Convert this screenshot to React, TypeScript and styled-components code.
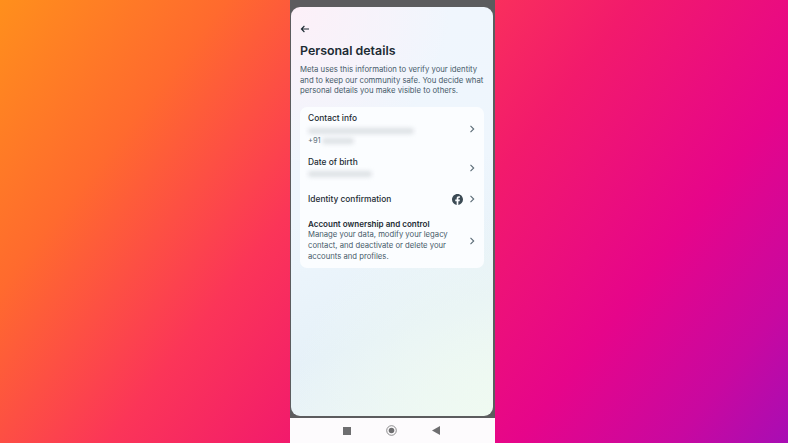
import React from "react";
import styled, { createGlobalStyle } from "styled-components";

const Global = createGlobalStyle`
  html, body { margin: 0; padding: 0; height: 100%; overflow: hidden; }
  #root { height: 100%; }
  * { box-sizing: border-box; }
`;

const Stage = styled.div`
  width: 788px;
  height: 443px;
  display: flex;
  justify-content: center;
  padding-right: 3px;
  background: linear-gradient(128deg, #ff8f1c 0%, #ff6a2e 20%, #fb3558 40%, #f21a6c 56%, #e6058a 76%, #c808a0 90%, #a80db4 100%);
  font-family: Inter, "Noto Sans", sans-serif;
`;

const Phone = styled.div`
  width: 205px;
  height: 443px;
  display: flex;
  flex-direction: column;
  background: #5c5c5e;
`;

const Sheet = styled.main`
  width: 202px;
  height: 409px;
  margin: 7px 0 2px 1px;
  padding: 17px 9px 0;
  border-radius: 9px;
  background:
    radial-gradient(circle at 0% 0%, #fdf0f8 0%, rgba(253,240,248,0) 35%),
    radial-gradient(circle at 100% 100%, #effaf1 0%, rgba(239,250,241,0) 45%),
    linear-gradient(160deg, #f1f6fd 0%, #eef6fd 45%, #e6f1f8 75%, #edf6f5 100%);
`;

const Back = styled.button`
  display: block;
  width: 10px;
  height: 10px;
  padding: 0;
  border: 0;
  background: none;
  color: #1c2b33;
  margin-bottom: 8px;
  svg { display: block; }
`;

const Title = styled.h1`
  margin: 0 0 5px;
  font-size: 12.4px;
  line-height: 17px;
  font-weight: 600;
  color: #1c2b33;
`;

const Intro = styled.p`
  margin: 0 0 11.7px;
  font-size: 7.75px;
  line-height: 10.6px;
  color: #465a69;
  white-space: nowrap;
`;

const Card = styled.section`
  width: 184px;
  height: 161px;
  padding-top: 5.5px;
  border-radius: 7px;
  background: #fbfdff;
  display: flex;
  flex-direction: column;
`;

const Row = styled.div<{ $h: number; $top?: number }>`
  height: ${(p) => p.$h}px;
  padding: ${(p) => p.$top ?? 0}px 9px 0 8px;
  display: flex;
  align-items: center;
  gap: 6.5px;
`;

const RowBody = styled.div`
  flex: 1;
  min-width: 0;
`;

const LiftedBody = styled(RowBody)`
  padding-bottom: 3px;
`;

const RowTitle = styled.div`
  font-size: 8.4px;
  line-height: 11px;
  font-weight: 500;
  color: #1c2b33;
  white-space: nowrap;
`;

const StrongTitle = styled(RowTitle)`
  font-size: 8.05px;
  font-weight: 600;
`;

const RowText = styled.div`
  font-size: 7.7px;
  line-height: 10.8px;
  color: #465a69;
  white-space: nowrap;
`;

const Blur = styled.div<{ $w: number }>`
  width: ${(p) => p.$w}px;
  height: 6px;
  margin-top: 3.5px;
  background: #dde1e5;
  border-radius: 3px;
  filter: blur(2px);
`;

const PhoneLine = styled.div`
  display: flex;
  align-items: center;
  gap: 1px;
  margin-top: 2px;
  font-size: 7.5px;
  line-height: 10px;
  color: #5a6c78;
  ${Blur} { margin-top: 0; }
`;

const Chevron = styled.svg`
  flex: none;
  width: 6px;
  height: 8px;
  color: #5a6b76;
`;

const FacebookMark = styled.svg`
  flex: none;
  width: 11px;
  height: 11px;
  fill: #3b4a54;
`;

const NavBar = styled.nav`
  height: 25px;
  background: #fdfbfd;
  display: flex;
  align-items: center;
  justify-content: center;
  gap: 35px;
  padding-right: 2px;
  color: #6e6e70;
  svg { display: block; }
`;

const Caret = () => (
  <Chevron viewBox="0 0 6 8" fill="none" stroke="currentColor" strokeWidth="1.1">
    <path d="M1.5 .8 4.7 4 1.5 7.2" />
  </Chevron>
);

export default function App() {
  return (
    <Stage>
      <Global />
      <Phone>
        <Sheet>
          <Back aria-label="Back">
            <svg width="10" height="10" viewBox="0 0 10 10" fill="none" stroke="currentColor" strokeWidth="1.1">
              <path d="M9 5H1.4M4.4 2 1.4 5l3 3" />
            </svg>
          </Back>
          <Title>Personal details</Title>
          <Intro>
            Meta uses this information to verify your identity
            <br />
            and to keep our community safe. You decide what
            <br />
            personal details you make visible to others.
          </Intro>
          <Card>
            <Row $h={33}>
              <RowBody>
                <RowTitle>Contact info</RowTitle>
                <Blur $w={106} />
                <PhoneLine>
                  +91<Blur $w={32} />
                </PhoneLine>
              </RowBody>
              <Caret />
            </Row>
            <Row $h={45}>
              <LiftedBody>
                <RowTitle>Date of birth</RowTitle>
                <Blur $w={64} />
              </LiftedBody>
              <Caret />
            </Row>
            <Row $h={17}>
              <RowBody>
                <RowTitle>Identity confirmation</RowTitle>
              </RowBody>
              <FacebookMark viewBox="0 0 24 24">
                <path d="M24 12.07C24 5.4 18.63 0 12 0S0 5.4 0 12.07c0 6.03 4.39 11.02 10.13 11.93v-8.44H7.08v-3.49h3.05V9.41c0-3.02 1.79-4.69 4.53-4.69 1.31 0 2.69.24 2.69.24v2.97h-1.51c-1.49 0-1.96.93-1.96 1.89v2.25h3.33l-.53 3.49h-2.8V24C19.61 23.09 24 18.1 24 12.07z" />
              </FacebookMark>
              <Caret />
            </Row>
            <Row $h={60.5} $top={5}>
              <RowBody>
                <StrongTitle>Account ownership and control</StrongTitle>
                <RowText>
                  Manage your data, modify your legacy
                  <br />
                  contact, and deactivate or delete your
                  <br />
                  accounts and profiles.
                </RowText>
              </RowBody>
              <Caret />
            </Row>
          </Card>
        </Sheet>
        <NavBar>
          <svg width="8" height="8" viewBox="0 0 8 8" fill="currentColor">
            <rect width="8" height="8" />
          </svg>
          <svg width="11" height="11" viewBox="0 0 11 11">
            <circle cx="5.5" cy="5.5" r="4.8" fill="none" stroke="currentColor" strokeWidth=".8" />
            <circle cx="5.5" cy="5.5" r="2.8" fill="currentColor" />
          </svg>
          <svg width="8" height="9" viewBox="0 0 8 9" fill="currentColor">
            <path d="M8 0v9L0 4.5z" />
          </svg>
        </NavBar>
      </Phone>
    </Stage>
  );
}
